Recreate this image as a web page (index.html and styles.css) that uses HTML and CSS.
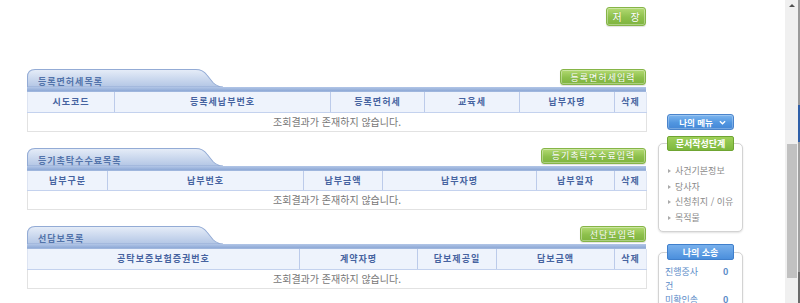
FILE: index.html
```html
<!DOCTYPE html>
<html lang="ko">
<head>
<meta charset="utf-8">
<title>등록면허세</title>
<link rel="stylesheet" href="styles.css">
</head>
<body>
<div class="page">
  <div class="main">
    <div class="content">
      <div class="toolbar"><button class="btn-green save">저 장</button></div>

      <section class="sec">
        <div class="sec-head">
          <div class="tab">
            <svg class="tab-bg" viewBox="0 0 195 18" preserveAspectRatio="none"><defs><linearGradient id="tg1" x1="0" y1="0" x2="0" y2="1"><stop offset="0" stop-color="#e6edf8"/><stop offset="1" stop-color="#b3c6e5"/></linearGradient></defs><path d="M0.5 18 L0.5 8 Q0.5 0.5 8 0.5 L168 0.5 Q175 0.5 179 6 L185 13.5 Q189 18 196 18 Z" fill="url(#tg1)" stroke="#93abd5"/></svg>
            <span class="tab-text">등록면허세목록</span>
          </div>
          <button class="btn-green add w1">등록면허세입력</button>
        </div>
        <div class="sec-bar"></div>
        <table class="grid g1">
          <colgroup><col><col><col><col><col><col></colgroup>
          <thead><tr><th>시도코드</th><th>등록세납부번호</th><th>등록면허세</th><th>교육세</th><th>납부자명</th><th>삭제</th></tr></thead>
          <tbody><tr><td colspan="6">조회결과가 존재하지 않습니다.</td></tr></tbody>
        </table>
      </section>

      <section class="sec">
        <div class="sec-head">
          <div class="tab">
            <svg class="tab-bg" viewBox="0 0 195 18" preserveAspectRatio="none"><defs><linearGradient id="tg2" x1="0" y1="0" x2="0" y2="1"><stop offset="0" stop-color="#e6edf8"/><stop offset="1" stop-color="#b3c6e5"/></linearGradient></defs><path d="M0.5 18 L0.5 8 Q0.5 0.5 8 0.5 L168 0.5 Q175 0.5 179 6 L185 13.5 Q189 18 196 18 Z" fill="url(#tg2)" stroke="#93abd5"/></svg>
            <span class="tab-text">등기촉탁수수료목록</span>
          </div>
          <button class="btn-green add w2">등기촉탁수수료입력</button>
        </div>
        <div class="sec-bar"></div>
        <table class="grid g2">
          <colgroup><col><col><col><col><col><col></colgroup>
          <thead><tr><th>납부구분</th><th>납부번호</th><th>납부금액</th><th>납부자명</th><th>납부일자</th><th>삭제</th></tr></thead>
          <tbody><tr><td colspan="6">조회결과가 존재하지 않습니다.</td></tr></tbody>
        </table>
      </section>

      <section class="sec">
        <div class="sec-head">
          <div class="tab">
            <svg class="tab-bg" viewBox="0 0 195 18" preserveAspectRatio="none"><defs><linearGradient id="tg3" x1="0" y1="0" x2="0" y2="1"><stop offset="0" stop-color="#e6edf8"/><stop offset="1" stop-color="#b3c6e5"/></linearGradient></defs><path d="M0.5 18 L0.5 8 Q0.5 0.5 8 0.5 L168 0.5 Q175 0.5 179 6 L185 13.5 Q189 18 196 18 Z" fill="url(#tg3)" stroke="#93abd5"/></svg>
            <span class="tab-text">선담보목록</span>
          </div>
          <button class="btn-green add w3">선담보입력</button>
        </div>
        <div class="sec-bar"></div>
        <table class="grid g3">
          <colgroup><col><col><col><col><col></colgroup>
          <thead><tr><th>공탁보증보험증권번호</th><th>계약자명</th><th>담보제공일</th><th>담보금액</th><th>삭제</th></tr></thead>
          <tbody><tr><td colspan="5">조회결과가 존재하지 않습니다.</td></tr></tbody>
        </table>
      </section>
    </div>

    <aside class="side">
      <button class="btn-blue menu">나의 메뉴 <svg class="chev" viewBox="0 0 8 5"><path d="M1 1 L4 4 L7 1" fill="none" stroke="#fff" stroke-width="1.5"/></svg></button>

      <div class="box steps">
        <div class="label-green">문서작성단계</div>
        <ul class="step-list">
          <li>사건기본정보</li>
          <li>당사자</li>
          <li>신청취지 / 이유</li>
          <li>목적물</li>
        </ul>
      </div>

      <div class="box suits">
        <div class="label-blue">나의 소송</div>
        <div class="suit-row"><span class="suit-name">진행중사건</span><span class="suit-val">0</span></div>
        <div class="suit-row"><span class="suit-name">미확인송달</span><span class="suit-val">0</span></div>
      </div>
    </aside>
  </div>

  <div class="scroll">
    <div class="scroll-track">
      <div class="scroll-up"></div>
      <div class="scroll-thumb"></div>
    </div>
    <div class="scroll-edge"></div>
  </div>
</div>
</body>
</html>
```

FILE: styles.css
```css
* { box-sizing: border-box; }

html, body {
  margin: 0;
  padding: 0;
  background: #fff;
  font-family: "Noto Sans CJK KR", "Noto Sans", sans-serif;
}

.page {
  display: flex;
  width: 800px;
  height: 303px;
  overflow: hidden;
}

.main {
  width: 785px;
  display: flex;
  align-items: flex-start;
}

/* ---------- left content ---------- */
.content {
  margin-left: 27px;
  width: 619px;
  padding-top: 7px;
  display: flex;
  flex-direction: column;
}

.toolbar {
  display: flex;
  justify-content: flex-end;
  height: 19px;
  margin-bottom: 43px;
}

.btn-green {
  display: flex;
  align-items: center;
  justify-content: center;
  padding: 0;
  margin: 0;
  font-family: inherit;
  color: #fff;
  font-size: 9px;
  letter-spacing: 1px;
  border: 1px solid #86b547;
  border-radius: 3px;
  background: linear-gradient(#b3da72, #8dc04c 55%, #7fb43f);
  box-shadow: inset 0 0 0 1px rgba(255,255,255,0.35), 0 1px 1px rgba(0,0,0,0.12);
  text-shadow: 0 0 1px rgba(80,120,30,0.4);
}

.save {
  width: 40px;
  height: 19px;
  font-size: 10px;
  letter-spacing: 3px;
  padding-left: 3px;
}

.add { height: 16px; }
.w1 { width: 86px; }
.w2 { width: 105px; }
.w3 { width: 66px; }

.sec + .sec { margin-top: 16px; }

.sec-head {
  display: flex;
  justify-content: space-between;
  align-items: flex-start;
  height: 18px;
}

.tab {
  position: relative;
  width: 195px;
  height: 18px;
  padding: 8px 0 0 11px;
}

.tab-bg {
  position: absolute;
  left: 0;
  top: 0;
  width: 196px;
  height: 18px;
}

.tab-text {
  position: relative;
  display: block;
  font-size: 9px;
  line-height: 9px;
  font-weight: 700;
  letter-spacing: 1px;
  color: #5273aa;
}

.sec-bar {
  height: 5px;
  background: linear-gradient(#b2c6e7, #8ea9d6);
  border-bottom: 1px solid #9fb6dd;
}

.grid {
  width: 619px;
  border-collapse: collapse;
  table-layout: fixed;
}

.grid th {
  height: 20px;
  padding: 0;
  background: #eef3fc;
  border-left: 1px solid #bccbea;
  border-bottom: 1px solid #c4d2ee;
  font-size: 9px;
  font-weight: 700;
  letter-spacing: 1px;
  color: #4663a0;
  text-align: center;
  line-height: 19px;
}

.grid th:first-child { border-left: 1px solid #dde4f2; }
.grid th:last-child { border-right: 1px solid #dde4f2; }

.grid td {
  height: 19px;
  padding: 0;
  text-align: center;
  font-size: 10px;
  color: #777;
  border: 1px solid #e2e2e2;
  border-top: none;
  line-height: 18px;
}

.g1 col:nth-child(1) { width: 87px; }
.g1 col:nth-child(2) { width: 216px; }
.g1 col:nth-child(3) { width: 94px; }
.g1 col:nth-child(4) { width: 95px; }
.g1 col:nth-child(5) { width: 95px; }
.g1 col:nth-child(6) { width: 32px; }

.g2 col:nth-child(1) { width: 80px; }
.g2 col:nth-child(2) { width: 196px; }
.g2 col:nth-child(3) { width: 79px; }
.g2 col:nth-child(4) { width: 154px; }
.g2 col:nth-child(5) { width: 78px; }
.g2 col:nth-child(6) { width: 32px; }

.g3 col:nth-child(1) { width: 272px; }
.g3 col:nth-child(2) { width: 118px; }
.g3 col:nth-child(3) { width: 79px; }
.g3 col:nth-child(4) { width: 118px; }
.g3 col:nth-child(5) { width: 32px; }

/* ---------- right sidebar ---------- */
.side {
  margin-left: 12px;
  width: 85px;
  padding-top: 114px;
  display: flex;
  flex-direction: column;
}

.btn-blue {
  display: flex;
  align-items: center;
  justify-content: center;
  gap: 6px;
  padding: 0 0 0 4px;
  margin: 0;
  font-family: inherit;
  color: #fff;
  font-size: 8.5px;
  font-weight: 700;
  border: 1px solid #4a84cc;
  border-radius: 3px;
  background: linear-gradient(#7db5ee, #5196e0 55%, #4487d6);
  box-shadow: inset 0 0 0 1px rgba(255,255,255,0.25);
}

.menu {
  margin-left: 9px;
  width: 67px;
  height: 16px;
}

.chev { width: 7px; height: 5px; }

.box {
  border: 1px solid #d3d3d3;
  border-radius: 5px;
  box-shadow: 0 1px 2px rgba(0,0,0,0.12);
  background: #fff;
}

.steps {
  margin-top: 13px;
  height: 89px;
}

.label-green, .label-blue {
  width: 67px;
  height: 15px;
  margin: -8px auto 0;
  border-radius: 2px;
  color: #fff;
  font-size: 9px;
  font-weight: 700;
  text-align: center;
  line-height: 14px;
}

.label-green {
  border: 1px solid #6fa532;
  background: linear-gradient(#9fd05a, #7db83d);
}

.label-blue {
  margin-top: -9px;
  height: 16px;
  line-height: 15px;
  border: 1px solid #3f7fcc;
  background: linear-gradient(#78b0ec, #4b8fdc);
}

.step-list {
  list-style: none;
  margin: 0;
  padding: 12px 0 0 9px;
}

.step-list li {
  position: relative;
  padding-left: 7px;
  font-size: 9px;
  line-height: 15.5px;
  color: #8a8a8a;
}

.step-list li::before {
  content: "";
  position: absolute;
  left: 0;
  top: 6px;
  border-left: 3px solid #aaa;
  border-top: 2px solid transparent;
  border-bottom: 2px solid transparent;
}

.suits {
  margin-top: 20px;
  height: 70px;
}

.suit-row {
  display: flex;
  padding-left: 6px;
  margin-top: 5px;
}

.suit-row + .suit-row { margin-top: 0; }

.suit-name {
  width: 40px;
  font-size: 9px;
  line-height: 14px;
  color: #5c8cc8;
  word-break: break-all;
}

.suit-val {
  margin-left: 18px;
  font-size: 9px;
  font-weight: 700;
  line-height: 14px;
  color: #5c8cc8;
}

/* ---------- scrollbar ---------- */
.scroll {
  width: 15px;
  display: flex;
}

.scroll-track {
  width: 13px;
  height: 303px;
  background: #f0f0f0;
  display: flex;
  flex-direction: column;
  align-items: center;
}

.scroll-up {
  margin-top: 4px;
  width: 0;
  height: 0;
  border-left: 3px solid transparent;
  border-right: 3px solid transparent;
  border-bottom: 3px solid #505050;
}

.scroll-thumb {
  margin-top: 137px;
  width: 10px;
  height: 134px;
  background: #c1c1c1;
}

.scroll-edge {
  width: 2px;
  height: 303px;
  background: linear-gradient(#9a9a9a 0, #9a9a9a 105px, #2f5fa8 105px, #2f5fa8 142px, #a0a0a0 142px, #a0a0a0 272px, #6a6a6a 272px);
}
```
